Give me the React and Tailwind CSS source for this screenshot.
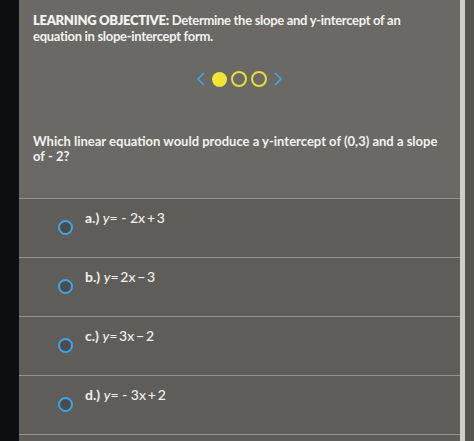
const OPTIONS = [
  { label: 'a.)', eq: '=\u00a0-\u00a02x\u2009+\u20093' },
  { label: 'b.)', eq: '=\u20092x\u2009\u2212\u20093' },
  { label: 'c.)', eq: '=\u20093x\u2009\u2212\u20092' },
  { label: 'd.)', eq: '=\u00a0-\u00a03x\u2009+\u20092' },
]

function Chevron({ dir }) {
  return (
    <svg width="10" height="14" viewBox="0 0 10 14" fill="none" stroke="#3fa7e6" strokeWidth="1.6">
      {dir === 'left' ? <path d="M8 1 L2 7 L8 13" /> : <path d="M2 1 L8 7 L2 13" />}
    </svg>
  )
}

function Pager() {
  return (
    <div className="flex items-center justify-center gap-[4px] mt-[27px]">
      <Chevron dir="left" />
      <span className="ml-[2px] w-[15px] h-[15px] rounded-full bg-[#f2e634]" />
      <span className="w-[16px] h-[16px] rounded-full border-2 border-[#e9dd3a]" />
      <span className="mr-[2px] w-[16px] h-[16px] rounded-full border-2 border-[#e9dd3a]" />
      <Chevron dir="right" />
    </div>
  )
}

function OptionRow({ label, eq }) {
  return (
    <div className="h-[59px] border-t border-[#95948f] flex items-start pl-[39px]">
      <span className="mt-[21px] w-[15px] h-[15px] rounded-full border-[2.5px] border-[#3ea4e8] bg-[#4c4c4c] shrink-0" />
      <div className="ml-[12px] mt-[10px] text-[14px] leading-[17px] font-medium text-[#f1f0ec] whitespace-nowrap">
        <span className="font-bold">{label}</span>{' '}
        <span className="italic">y</span>
        <span>{eq}</span>
      </div>
    </div>
  )
}

export default function App() {
  return (
    <div
      className="w-[474px] h-[441px] flex overflow-hidden bg-[#111]"
      style={{ fontFamily: 'Lato, "Open Sans", Arial, sans-serif' }}
    >
      <div className="w-[19px] bg-[#0d0e10]" />
      <div className="w-[441px] flex flex-col">
        <div className="h-[198px] bg-[#6a6965] px-[14px] pt-[12px] text-[#f3f2ee]">
          <p className="text-[13px] leading-[16px] font-bold tracking-[-0.3px] whitespace-nowrap">
            <span className="font-extrabold">LEARNING OBJECTIVE:</span> Determine the slope and y-intercept of an
            <br />
            equation in slope-intercept form.
          </p>
          <Pager />
          <p className="mt-[47px] text-[13px] leading-[15px] font-bold whitespace-nowrap">
            Which linear equation would produce a y-intercept of (0,3) and a slope
            <br />
            of - 2?
          </p>
        </div>
        <div className="flex-1 bg-[#5e5d59] flex flex-col">
          {OPTIONS.map(o => (
            <OptionRow key={o.label} {...o} />
          ))}
          <div className="border-t border-[#95948f] flex-1" />
        </div>
      </div>
      <div className="w-[5px] bg-[#cfcec9]" />
      <div className="flex-1 bg-[#55544f]" />
    </div>
  )
}
